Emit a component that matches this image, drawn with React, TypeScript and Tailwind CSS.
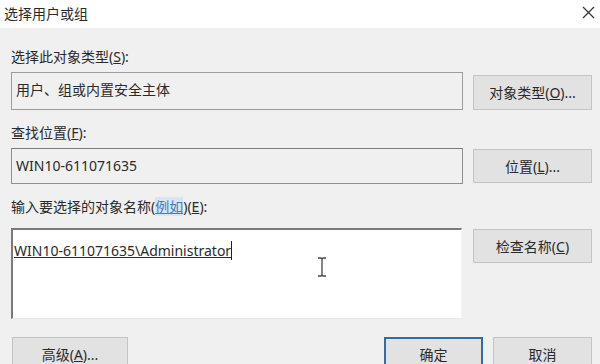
export default function App() {
  const font = { fontFamily: '"Noto Sans", "Noto Sans CJK SC", sans-serif' }

  return (
    <div
      className="relative w-[600px] h-[364px] overflow-hidden bg-[#f0f0f0] text-[14px] text-[#2a2a2a]"
      style={font}
    >
      {/* title bar */}
      <div className="flex h-[28px] items-center justify-between bg-white pl-[4px] pr-[5px]">
        <span className="leading-[18px]">选择用户或组</span>
        <svg width="13" height="13" viewBox="0 0 13 13" className="mb-[4px]">
          <path d="M1 1 L12 12 M12 1 L1 12" stroke="#333" strokeWidth="1.2" />
        </svg>
      </div>

      <div className="pl-[11px] pr-[8px] pt-[20px]">
        {/* object type */}
        <div className="leading-[18px]">
          选择此对象类型(<span className="underline">S</span>):
        </div>
        <div className="mt-[6px] flex items-end">
          <div className="flex h-[38px] w-[452px] items-center border border-[#9c9c9c] pb-[3px] pl-[4px]">
            用户、组或内置安全主体
          </div>
          <button className="ml-[10px] flex h-[35px] w-[119px] items-center justify-center border border-[#c4c4c4] bg-[#e2e2e2]">
            对象类型(<span className="underline">O</span>)...
          </button>
        </div>

        {/* location */}
        <div className="mt-[14px] leading-[18px]">
          查找位置(<span className="underline">F</span>):
        </div>
        <div className="mt-[6px] flex items-center">
          <div className="flex h-[36px] w-[452px] items-center border border-[#8f8f8f] border-t-[#7a7a7a] pb-[2px] pl-[4px]">
            WIN10-611071635
          </div>
          <button className="ml-[10px] flex h-[34px] w-[119px] items-center justify-center border border-[#c4c4c4] bg-[#e2e2e2]">
            位置(<span className="underline">L</span>)...
          </button>
        </div>

        {/* object names */}
        <div className="mt-[14px] leading-[18px]">
          输入要选择的对象名称(
          <span className="bg-[#d6e6f4] text-[#3b7fc0] underline">例如</span>)(
          <span className="underline">E</span>):
        </div>
        <div className="mt-[12px] flex items-start">
          <div className="relative h-[91px] w-[451px] border-t-2 border-l-2 border-r border-b border-t-[#7a7a7a] border-l-[#7a7a7a] border-r-[#f4f4f4] border-b-[#e6e6e6] bg-white pl-[1px] pt-[10px]">
            <span className="border-r border-r-[#222] leading-[18px] underline">
              WIN10-611071635\Administrator
            </span>
          </div>
          <button className="ml-[11px] mt-[1px] flex h-[34px] w-[119px] items-center justify-center border border-[#c4c4c4] bg-[#e2e2e2]">
            检查名称(<span className="underline">C</span>)
          </button>
        </div>

        {/* bottom buttons */}
        <div className="mt-[18px] flex items-start">
          <button className="ml-[1px] flex h-[34px] w-[116px] items-center justify-center border border-[#c4c4c4] bg-[#e2e2e2]">
            高级(<span className="underline">A</span>)...
          </button>
          <button className="ml-auto flex h-[34px] w-[99px] items-center justify-center border-2 border-[#2f6ea3] bg-[#e2e2e2]">
            确定
          </button>
          <button className="ml-[10px] flex h-[34px] w-[99px] items-center justify-center border border-[#c4c4c4] bg-[#e2e2e2]">
            取消
          </button>
        </div>
      </div>

      {/* mouse I-beam cursor */}
      <svg
        width="10"
        height="20"
        viewBox="0 0 10 20"
        className="absolute left-[317px] top-[257px]"
      >
        <path
          d="M1 1 H4 Q5 1 5 3 V17 Q5 19 4 19 H1 M9 1 H6 Q5 1 5 3 M5 17 Q5 19 6 19 H9"
          fill="none"
          stroke="#444"
          strokeWidth="1.3"
        />
      </svg>
    </div>
  )
}
